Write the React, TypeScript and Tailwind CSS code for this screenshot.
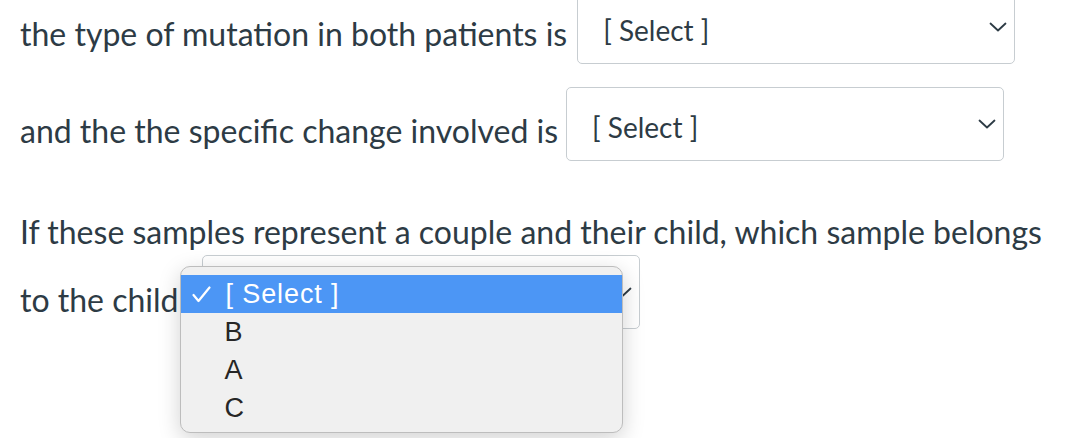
import React from "react";

const Chevron = () => (
  <svg width="18" height="10" viewBox="0 0 18 10" fill="none" className="shrink-0">
    <path d="M1.5 1.5 L9 8.5 L16.5 1.5" stroke="#2d3b45" strokeWidth="1.8" strokeLinecap="round" strokeLinejoin="round" />
  </svg>
);

const Check = () => (
  <svg width="19" height="17" viewBox="0 0 19 17" fill="none" className="shrink-0">
    <path d="M1.5 9 L6.5 15 L17.5 1.5" stroke="#ffffff" strokeWidth="2.2" strokeLinecap="round" strokeLinejoin="round" />
  </svg>
);

function SelectBox({ className = "", children }: { className?: string; children?: React.ReactNode }) {
  return (
    <div
      className={`relative flex h-[74px] w-[438px] shrink-0 items-center rounded-[5px] border border-[#c7cdd1] bg-white pl-[25px] pr-[7px] ${className}`}
    >
      <span className="pt-[5px] text-[28px] leading-[34px] text-[#2d3b45]">[ Select ]</span>
      <span className="ml-auto">
        <Chevron />
      </span>
      {children}
    </div>
  );
}

export default function App() {
  return (
    <div
      className="min-h-[438px] w-[1086px] overflow-hidden bg-white pl-[20px] text-[32px] text-[#2d3b45]"
      style={{ fontFamily: "Lato, 'Noto Sans', sans-serif" }}
    >
      <div className="-mt-[10px] flex h-[74px] items-center gap-[10px]">
        <span className="pt-[14px] leading-[40px]">the type of mutation in both patients is</span>
        <SelectBox />
      </div>
      <div className="mt-[23px] flex h-[74px] items-center gap-[8px]">
        <span className="pt-[14px] leading-[40px]">and the the specific change involved is</span>
        <SelectBox />
      </div>
      <div className="mt-[51px] whitespace-nowrap leading-[40px]">
        If these samples represent a couple and their child, which sample belongs
      </div>
      <div className="mt-[3px] flex h-[74px] items-center gap-[24px]">
        <span className="pt-[16px] leading-[40px]">to the child</span>
        <SelectBox>
          <div
            className="absolute left-[-23px] top-[10px] z-10 h-[167px] w-[443px] rounded-[10px] border border-[#bdbdbd] bg-[#f0f0f0] pt-[8px] shadow-[0_6px_22px_rgba(0,0,0,0.18)]"
            style={{ fontFamily: "'Liberation Sans', Arial, sans-serif" }}
          >
            <div className="flex h-[38px] items-center bg-[#4c96f5] pl-[11px] text-white">
              <Check />
              <span className="ml-[14px] text-[27px] tracking-[0.9px]">[ Select ]</span>
            </div>
            <div className="flex h-[38px] items-center pl-[43px] text-[27px] text-[#262626]">B</div>
            <div className="flex h-[38px] items-center pl-[43px] text-[27px] text-[#262626]">A</div>
            <div className="flex h-[38px] items-center pl-[43px] text-[27px] text-[#262626]">C</div>
          </div>
        </SelectBox>
      </div>
    </div>
  );
}
